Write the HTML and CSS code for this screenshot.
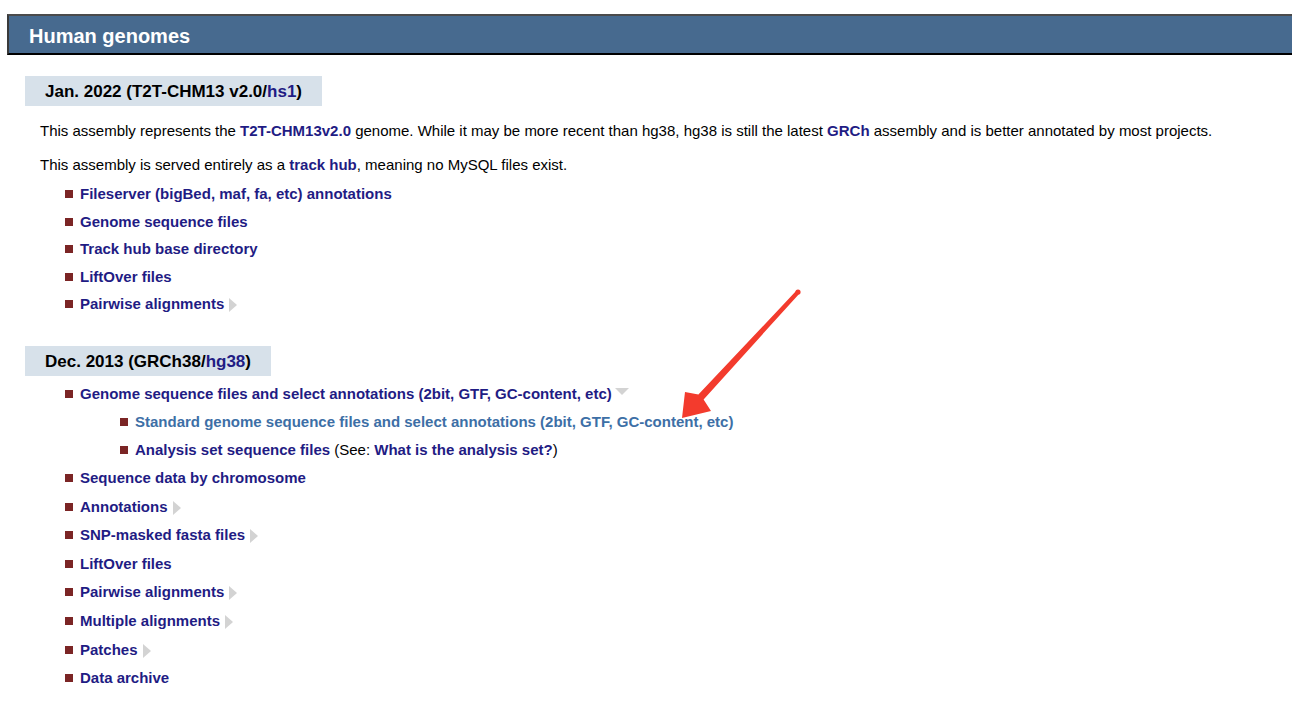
FILE: index.html
```html
<!DOCTYPE html>
<html>
<head>
<meta charset="utf-8">
<link rel="stylesheet" href="styles.css">
</head>
<body>
<div class="page">
  <div class="header"><h1>Human genomes</h1></div>

  <div class="section">
    <h2 class="section-title">Jan. 2022 (T2T-CHM13 v2.0/<a href="#">hs1</a>)</h2>
    <p class="para">This assembly represents the <a href="#">T2T-CHM13v2.0</a> genome. While it may be more recent than hg38, hg38 is still the latest <a href="#">GRCh</a> assembly and is better annotated by most projects.</p>
    <p class="para">This assembly is served entirely as a <a href="#">track hub</a>, meaning no MySQL files exist.</p>
    <ul class="list list-a">
      <li><a href="#">Fileserver (bigBed, maf, fa, etc) annotations</a></li>
      <li><a href="#">Genome sequence files</a></li>
      <li><a href="#">Track hub base directory</a></li>
      <li><a href="#">LiftOver files</a></li>
      <li><a href="#">Pairwise alignments</a><span class="tri-right"></span></li>
    </ul>
  </div>

  <div class="section section-2">
    <h2 class="section-title">Dec. 2013 (GRCh38/<a href="#">hg38</a>)</h2>
    <ul class="list list-b">
      <li><a href="#">Genome sequence files and select annotations (2bit, GTF, GC-content, etc)</a><span class="tri-down"></span>
        <ul class="list sub">
          <li><a class="hl" href="#">Standard genome sequence files and select annotations (2bit, GTF, GC-content, etc)</a></li>
          <li><a href="#">Analysis set sequence files</a> (See: <a href="#">What is the analysis set?</a>)</li>
        </ul>
      </li>
      <li><a href="#">Sequence data by chromosome</a></li>
      <li><a href="#">Annotations</a><span class="tri-right"></span></li>
      <li><a href="#">SNP-masked fasta files</a><span class="tri-right"></span></li>
      <li><a href="#">LiftOver files</a></li>
      <li><a href="#">Pairwise alignments</a><span class="tri-right"></span></li>
      <li><a href="#">Multiple alignments</a><span class="tri-right"></span></li>
      <li><a href="#">Patches</a><span class="tri-right"></span></li>
      <li><a href="#">Data archive</a></li>
    </ul>
  </div>

  <svg class="callout" width="135" height="140" viewBox="0 0 135 140">
    <polygon points="7,133 10,107 23.4,109.6 121.5,5.6 124.5,8.4 28.6,114.4 36,126" fill="#f33b2d"/>
    <circle cx="123" cy="7" r="2.6" fill="#f33b2d"/>
  </svg>
</div>
</body>
</html>
```

FILE: styles.css
```css
html, body {
  margin: 0;
  padding: 0;
  background: #ffffff;
}

body {
  font-family: "Liberation Sans", Arial, Helvetica, sans-serif;
  font-size: 15px;
  color: #000000;
}

.page {
  position: relative;
  padding: 14px 0 0 7px;
}

a {
  color: #1f1c84;
  font-weight: bold;
  text-decoration: none;
}

.header {
  background: #476a8f;
  border-top: 2px solid #4b4b4b;
  border-left: 2px solid #3a3a3a;
  border-bottom: 2px solid #000000;
  height: 37px;
  display: flex;
  align-items: center;
}

.header h1 {
  margin: 3px 0 0 20px;
  color: #ffffff;
  font-size: 20px;
  font-weight: bold;
}

.section {
  margin-left: 18px;
  padding-top: 21px;
}

.section-2 {
  padding-top: 28px;
}

.section-title {
  display: inline-block;
  margin: 0;
  background: #d7e1ea;
  height: 30px;
  line-height: 31px;
  padding: 0 20px;
  font-size: 17px;
  font-weight: bold;
}

.para {
  margin: 0 0 0 15px;
  line-height: 34px;
}

.section > .para:first-of-type {
  margin-top: 8px;
}

.list {
  list-style: none;
  margin: 0;
  padding: 0 0 0 40px;
}

.list li {
  display: block;
}

.list li::before {
  content: "";
  display: inline-block;
  width: 8px;
  height: 8px;
  background: #7b2525;
  margin-right: 7px;
  vertical-align: 1px;
}

.list-a {
  margin-top: -2px;
}

.list-a > li {
  line-height: 27.5px;
}

.list-b {
  margin-top: 4px;
}

.list-b > li {
  line-height: 28.6px;
}

.sub {
  padding-left: 55px;
}

.sub li {
  line-height: 28px;
}

a.hl {
  color: #3d6fa6;
}

.tri-right {
  display: inline-block;
  width: 0;
  height: 0;
  border-top: 7px solid transparent;
  border-bottom: 7px solid transparent;
  border-left: 8px solid #d3d3d3;
  margin-left: 5px;
  vertical-align: -3px;
}

.tri-down {
  display: inline-block;
  width: 0;
  height: 0;
  border-left: 7px solid transparent;
  border-right: 7px solid transparent;
  border-top: 7px solid #d3d3d3;
  margin-left: 3px;
  vertical-align: 4px;
}

.callout {
  position: absolute;
  left: 675px;
  top: 285px;
}
```
